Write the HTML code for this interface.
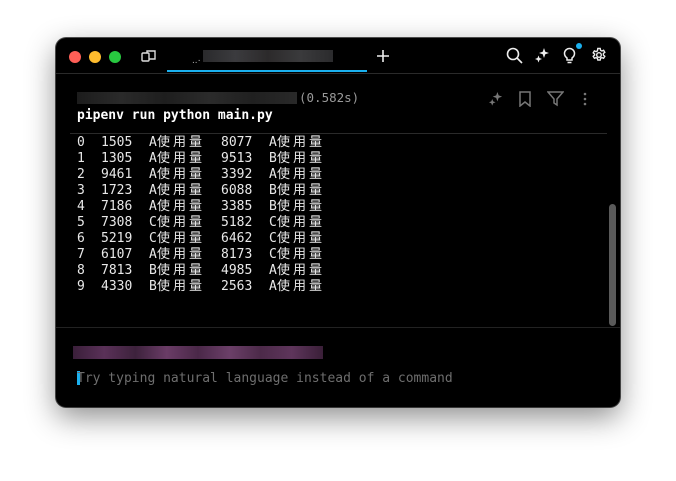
<!DOCTYPE html>
<html><head><meta charset="utf-8"><style>
html,body{margin:0;padding:0;background:#fff;width:676px;height:481px;overflow:hidden}
.win{position:absolute;left:56px;top:38px;width:564px;height:369px;background:#000;border-radius:10px;box-shadow:0 10px 30px rgba(0,0,0,.45),0 0 0 1px #555;overflow:hidden}
.m{font-family:"DejaVu Sans Mono","Liberation Mono","Noto Sans CJK JP",monospace;font-size:13px;line-height:16px;height:16px;position:absolute;white-space:pre;color:#e8e8e8}
.k{font-family:"Noto Sans CJK JP",sans-serif;font-size:13px;line-height:16px;height:16px;position:absolute;color:#e8e8e8}
.dot{position:absolute;top:13px;width:12px;height:12px;border-radius:50%}
</style></head><body>
<div class="win">
 <div class="dot" style="left:13px;background:#fe5f57"></div>
 <div class="dot" style="left:33px;background:#febc2e"></div>
 <div class="dot" style="left:53px;background:#28c840"></div>
 <svg style="position:absolute;left:85px;top:11px" width="16" height="14" viewBox="0 0 16 14" fill="none" stroke="#ddd" stroke-width="1.4"><rect x="1" y="4" width="7" height="8" rx="1"/><path d="M6 4V2h8v8h-6"/></svg>
 <div style="position:absolute;left:136px;top:17px;color:#aaa;font:10px sans-serif">..·</div>
 <div style="position:absolute;left:147px;top:12px;width:130px;height:12px;background:linear-gradient(90deg,#2a2a2c,#3b3b3e,#2c2a2b,#3a3a3c,#2b2b2d);"></div>
 <div style="position:absolute;left:111px;top:32px;width:200px;height:2px;background:#1ab0ee"></div>
 <svg style="position:absolute;left:320px;top:11px" width="14" height="14" viewBox="0 0 14 14" stroke="#eee" stroke-width="1.6"><path d="M7 1v12M1 7h12"/></svg>
 <svg style="position:absolute;left:450px;top:9px" width="17" height="17" viewBox="0 0 17 17" fill="none" stroke="#eee" stroke-width="1.6"><circle cx="7" cy="7" r="5.5"/><path d="M11 11l5 5"/></svg>
 <svg style="position:absolute;left:478px;top:9px" width="17" height="17" viewBox="0 0 17 17" fill="#eee"><path d="M10 1l1.3 3.7L15 6l-3.7 1.3L10 11 8.7 7.3 5 6l3.7-1.3z"/><path d="M4.5 8.5l1 2.5 2.5 1-2.5 1-1 2.5-1-2.5-2.5-1 2.5-1z"/></svg>
 <svg style="position:absolute;left:506px;top:9px" width="16" height="18" viewBox="0 0 16 18" fill="none" stroke="#eee" stroke-width="1.5"><path d="M5 13v-2C3 9.5 2.5 8 2.5 6.5a5 5 0 0110 0c0 1.5-.5 3-2.5 4.5v2z"/><path d="M5.5 15.5h4"/></svg>
 <div style="position:absolute;left:520px;top:5px;width:6px;height:6px;border-radius:50%;background:#1ab0ee"></div>
 <svg style="position:absolute;left:535px;top:9px" width="16" height="16" viewBox="0 0 16 16" fill="none" stroke="#eee" stroke-width="1.4"><circle cx="8" cy="8" r="2.3"/><path d="M6.8 1.5h2.4l.4 1.8 1.3.7 1.7-.7 1.2 2-1.4 1.2v1.6l1.4 1.2-1.2 2-1.7-.7-1.3.7-.4 1.8H6.8l-.4-1.8-1.3-.7-1.7.7-1.2-2 1.4-1.2V7.1L2.2 5.9l1.2-2 1.7.7 1.3-.7z"/></svg>
 <div style="position:absolute;left:0;top:35px;width:564px;height:1px;background:#2a2a2a"></div>

 <div style="position:absolute;left:21px;top:54px;width:220px;height:12px;background:linear-gradient(90deg,#1c1c1c,#2a2a2a,#1e1e1e,#2b2b2b,#202020,#292929)"></div>
 <div class="m" style="left:243px;top:52px;color:#999;font-size:12.5px">(0.582s)</div>
 <div class="m" style="left:21px;top:70px;font-weight:bold;color:#fff">pipenv run python main.py</div>
 <svg style="position:absolute;left:432px;top:53px" width="16" height="16" viewBox="0 0 17 17" fill="#777"><path d="M10 1l1.3 3.7L15 6l-3.7 1.3L10 11 8.7 7.3 5 6l3.7-1.3z"/><path d="M4.5 8.5l1 2.5 2.5 1-2.5 1-1 2.5-1-2.5-2.5-1 2.5-1z"/></svg>
 <svg style="position:absolute;left:462px;top:53px" width="14" height="16" viewBox="0 0 14 16" fill="none" stroke="#777" stroke-width="1.5"><path d="M2 1h10v14l-5-4-5 4z"/></svg>
 <svg style="position:absolute;left:491px;top:53px" width="17" height="16" viewBox="0 0 17 16" fill="none" stroke="#777" stroke-width="1.5"><path d="M1 1h15l-6 7v6l-3-2V8z"/></svg>
 <svg style="position:absolute;left:527px;top:53px" width="4" height="16" viewBox="0 0 4 16" fill="#777"><circle cx="2" cy="3" r="1.3"/><circle cx="2" cy="8" r="1.3"/><circle cx="2" cy="13" r="1.3"/></svg>
 <div style="position:absolute;left:14px;top:95px;width:537px;height:1px;background:#2a2a2a"></div>

 <div id="rows"></div>
 <div style="position:absolute;left:553px;top:166px;width:7px;height:122px;border-radius:4px;background:#5a5a5a"></div>
 <div style="position:absolute;left:0;top:289px;width:564px;height:1px;background:#222"></div>
 <div style="position:absolute;left:17px;top:308px;width:250px;height:13px;background:linear-gradient(90deg,#3a1f3a,#5a3158,#3d223c,#6a3c66,#4a2848,#6b3f68,#4c2a49,#5e355b,#3a1f38)"></div>
 <div style="position:absolute;left:21px;top:333px;width:3px;height:14px;background:#1ab0ee"></div>
 <div class="m" style="left:21px;top:333px;color:#6e6e6e">Try typing natural language instead of a command</div>
</div>
<script>
var d=[["0","1505","A","8077","A"],["1","1305","A","9513","B"],["2","9461","A","3392","A"],["3","1723","A","6088","B"],["4","7186","A","3385","B"],["5","7308","C","5182","C"],["6","5219","C","6462","C"],["7","6107","A","8173","C"],["8","7813","B","4985","A"],["9","4330","B","2563","A"]];
var h="";
function cjk(x,y){var s="";var ch=["使","用","量"];for(var i=0;i<3;i++)s+='<div class="k" style="left:'+(x+i*16)+'px;top:'+(y-2)+'px">'+ch[i]+'</div>';return s;}
d.forEach(function(r,i){var y=97+i*16;
h+='<div class="m" style="left:21px;top:'+y+'px">'+r[0]+'</div>';
h+='<div class="m" style="left:45px;top:'+y+'px">'+r[1]+'</div>';
h+='<div class="m" style="left:93px;top:'+y+'px">'+r[2]+'</div>'+cjk(101,y);
h+='<div class="m" style="left:165px;top:'+y+'px">'+r[3]+'</div>';
h+='<div class="m" style="left:213px;top:'+y+'px">'+r[4]+'</div>'+cjk(221,y);});
document.getElementById("rows").innerHTML=h;
</script>
</body></html>
